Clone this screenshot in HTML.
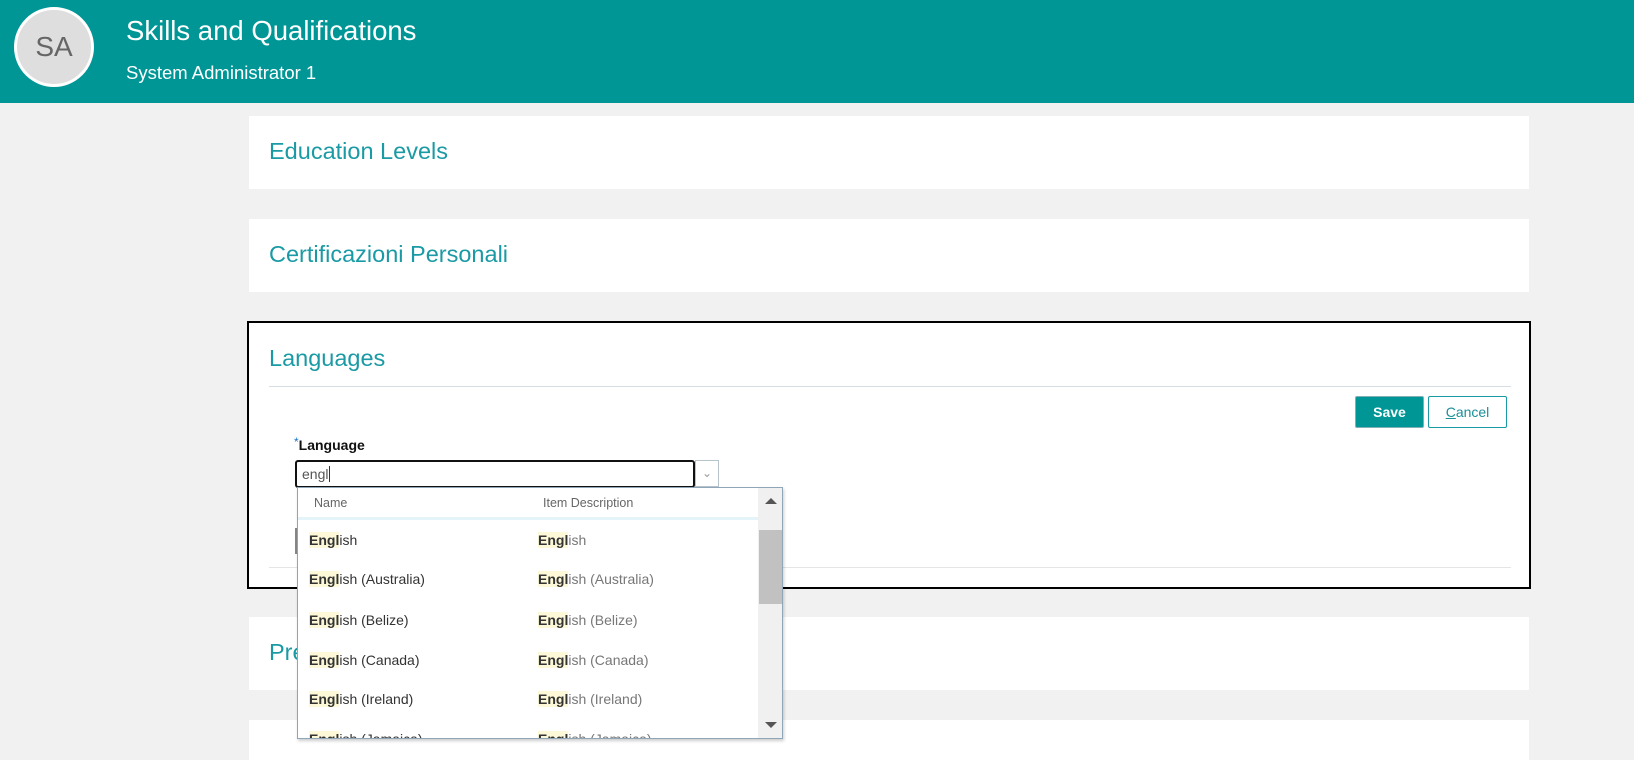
<!DOCTYPE html>
<html><head><style>
*{box-sizing:border-box;margin:0;padding:0}
body{width:1634px;height:748px;overflow:hidden;background:#f1f1f1;font-family:"Liberation Sans",Arial,sans-serif;position:relative}
.hdr{position:absolute;left:0;top:0;width:1634px;height:103px;background:#009696}
.av{position:absolute;left:14px;top:7px;width:80px;height:80px;border-radius:50%;background:#dedede;border:3px solid #fff;color:#666;font-size:28px;text-align:center;line-height:74px}
.t1{position:absolute;left:126px;top:15px;color:#fff;font-size:27.5px}
.t2{position:absolute;left:126px;top:62px;color:#fff;font-size:18.5px}
.card{position:absolute;left:249px;width:1280px;background:#fff}
.ct{position:absolute;left:20px;color:#1a9aa4;font-size:23.5px}
.btn{position:absolute;top:396px;height:32px;font-size:14px;font-weight:bold;text-align:center;line-height:30px;border-radius:2px}
.pop{position:absolute;left:297px;top:487px;width:486px;height:252px;background:#fff;border:1px solid #8fa6b8;box-shadow:1px 2px 3px rgba(0,0,0,.2);overflow:hidden}
.row{position:absolute;font-size:14px;color:#333}
.row b{background:#fcf8d8;color:#333}
.c2{color:#777}
</style></head><body>
<div class="hdr"><div class="av">SA</div><div class="t1">Skills and Qualifications</div><div class="t2">System Administrator 1</div></div>

<div class="card" style="top:116px;height:73px"><div class="ct" style="top:22px">Education Levels</div></div>
<div class="card" style="top:219px;height:73px"><div class="ct" style="top:22px">Certificazioni Personali</div></div>
<div class="card" style="top:617px;height:73px"><div class="ct" style="top:22px">Pre</div></div>
<div class="card" style="top:720px;height:40px"></div>

<div style="position:absolute;left:247px;top:321px;width:1284px;height:268px;background:#fff;border:2px solid #000">
  <div class="ct" style="left:20px;top:22px">Languages</div>
  <div style="position:absolute;left:20px;top:63px;width:1242px;height:1px;background:#d6dde3"></div>
  <div style="position:absolute;left:20px;top:244px;width:1242px;height:1px;background:#e5e5e5"></div>
  <div style="position:absolute;left:46px;top:205px;width:3px;height:26px;background:#888"></div>
</div>
<div class="btn" style="left:1355px;width:69px;background:#009696;color:#fff;border:1px solid #7fb0b5">Save</div>
<div class="btn" style="left:1428px;width:79px;background:#fff;color:#1a8f99;border:1px solid #1a9aa4;font-weight:normal"><u>C</u>ancel</div>

<div style="position:absolute;left:294px;top:435px;font-size:14px;font-weight:bold;color:#111"><span style="color:#1a73c8;font-weight:normal;vertical-align:4px;font-size:12px">*</span>Language</div>
<div style="position:absolute;left:295px;top:460px;width:400px;height:28px;border:2px solid #111;border-radius:3px;background:#fff;font-size:14px;color:#555;padding:4px 5px">engl<span style="border-left:1px solid #333;margin-left:1px"></span></div>
<div style="position:absolute;left:695px;top:460px;width:24px;height:27px;border:1px solid #b8c4cc;background:#fff;color:#999;font-size:12px;text-align:center;line-height:24px">&#8964;</div>

<div class="pop">
  <div style="position:absolute;left:16px;top:8px;font-size:12.5px;color:#666">Name</div>
  <div style="position:absolute;left:245px;top:8px;font-size:12.5px;color:#666">Item Description</div>
  <div style="position:absolute;left:0;top:29px;width:460px;height:3px;background:#e5f4f8"></div>
  <div style="position:absolute;left:460px;top:0;width:25px;height:252px;background:#f0f0f0"></div>
  <div style="position:absolute;left:461px;top:42px;width:23px;height:74px;background:#c1c1c1"></div>
  <div style="position:absolute;left:467px;top:10px;width:0;height:0;border-left:6px solid transparent;border-right:6px solid transparent;border-bottom:6px solid #555"></div>
  <div style="position:absolute;left:467px;top:234px;width:0;height:0;border-left:6px solid transparent;border-right:6px solid transparent;border-top:6px solid #555"></div>
  <div class="row" style="left:11px;top:44px"><b>Engl</b>ish</div>
  <div class="row c2" style="left:240px;top:44px"><b>Engl</b>ish</div>
  <div class="row" style="left:11px;top:83px"><b>Engl</b>ish (Australia)</div>
  <div class="row c2" style="left:240px;top:83px"><b>Engl</b>ish (Australia)</div>
  <div class="row" style="left:11px;top:124px"><b>Engl</b>ish (Belize)</div>
  <div class="row c2" style="left:240px;top:124px"><b>Engl</b>ish (Belize)</div>
  <div class="row" style="left:11px;top:164px"><b>Engl</b>ish (Canada)</div>
  <div class="row c2" style="left:240px;top:164px"><b>Engl</b>ish (Canada)</div>
  <div class="row" style="left:11px;top:203px"><b>Engl</b>ish (Ireland)</div>
  <div class="row c2" style="left:240px;top:203px"><b>Engl</b>ish (Ireland)</div>
  <div class="row" style="left:11px;top:243px"><b>Engl</b>ish (Jamaica)</div>
  <div class="row c2" style="left:240px;top:243px"><b>Engl</b>ish (Jamaica)</div>
</div>
</body></html>
